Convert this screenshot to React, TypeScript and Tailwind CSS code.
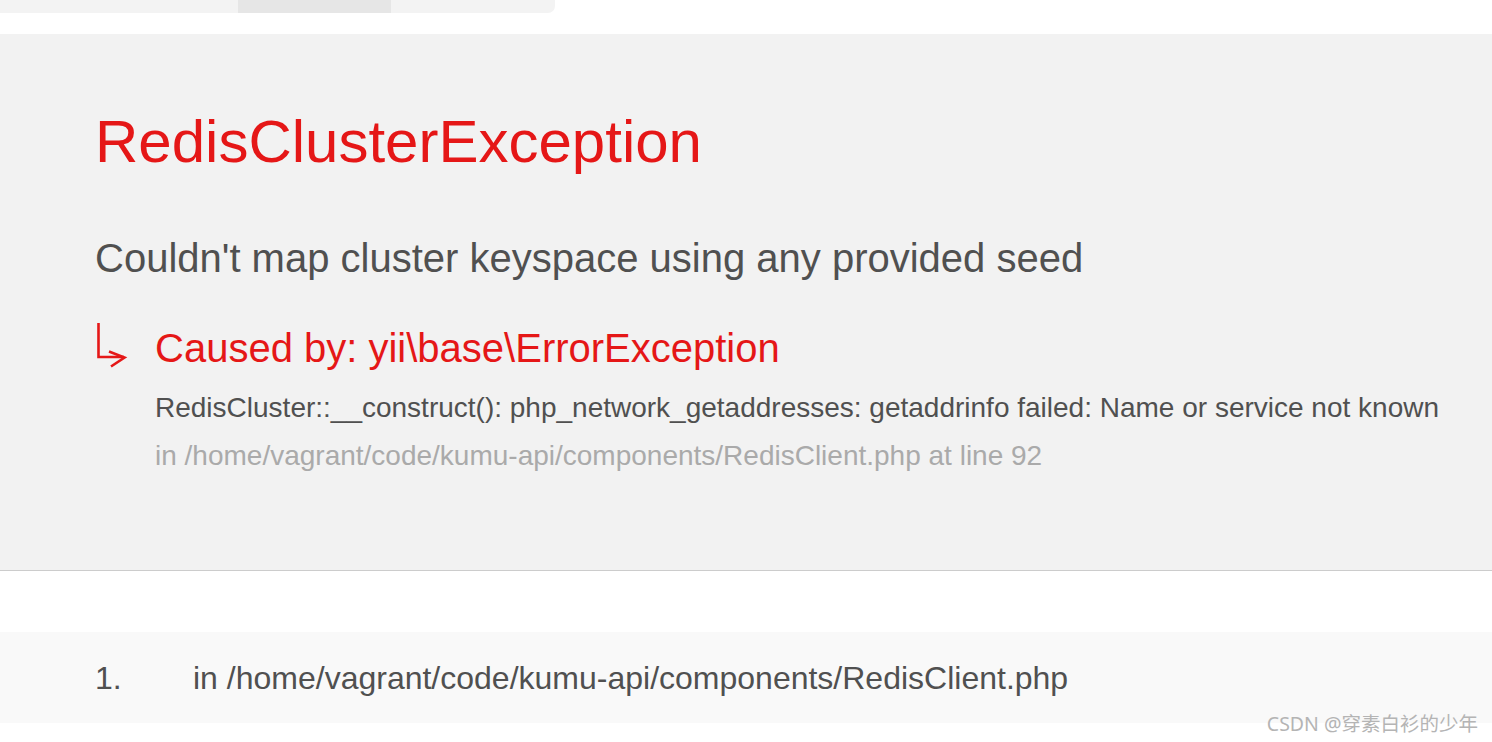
function CausedArrow() {
  return (
    <svg width="36" height="50" viewBox="0 0 36 50" fill="none" stroke="#e51717" strokeWidth="2.6" strokeLinecap="butt" strokeLinejoin="miter">
      <path d="M5.5 1 V35 H31" />
      <path d="M16 29.5 L31.5 35.5 L18 44.5" />
    </svg>
  );
}

export default function App() {
  return (
    <div className="relative min-h-[742px] bg-white font-['Liberation_Sans',Arial,sans-serif] overflow-hidden">
      {/* leftover tab strip at the very top */}
      <div className="flex h-[13px] w-[555px] bg-[#f3f3f3] rounded-br-[7px]">
        <div className="ml-[238px] w-[153px] bg-[#e6e6e6]" />
      </div>

      <div className="h-[21px]" />

      {/* exception header */}
      <div className="h-[537px] bg-[#f2f2f2] border-b border-[#cccccc] pt-[73px] pl-[95px]">
        <h1 className="text-[60px] leading-[70px] text-[#e51717]">RedisClusterException</h1>
        <h2 className="mt-[57px] text-[40px] leading-[48px] text-[#505050]">
          Couldn't map cluster keyspace using any provided seed
        </h2>

        <div className="mt-[42px] flex">
          <div className="w-[60px] -mt-[2px] -ml-[2px]">
            <CausedArrow />
          </div>
          <div className="ml-[2px]">
            <h3 className="text-[40px] leading-[48px] text-[#e51717]">Caused by: yii\base\ErrorException</h3>
            <p className="mt-[16px] text-[28px] leading-[40px] text-[#505050]">
              RedisCluster::__construct(): php_network_getaddresses: getaddrinfo failed: Name or service not known
            </p>
            <p className="mt-[8px] text-[28px] leading-[40px] text-[#aaaaaa]">
              in /home/vagrant/code/kumu-api/components/RedisClient.php at line 92
            </p>
          </div>
        </div>
      </div>

      <div className="h-[61px]" />

      {/* call stack */}
      <div className="h-[91px] bg-[#f9f9f9] flex items-center pl-[95px] text-[32px] text-[#505050]">
        <span className="w-[98px]">1.</span>
        <span>in /home/vagrant/code/kumu-api/components/RedisClient.php</span>
      </div>

      <div className="absolute right-[14px] bottom-[6px] text-[19.5px] leading-[24px] text-[#b4b4b4] font-['Noto_Sans','Noto_Sans_CJK_SC',sans-serif]">
        CSDN @穿素白衫的少年
      </div>
    </div>
  );
}
